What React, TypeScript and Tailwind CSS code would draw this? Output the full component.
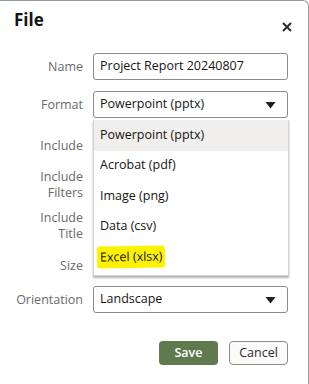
import React from "react";

const font = { fontFamily: '"Open Sans", "Noto Sans", sans-serif' };

const Caret = () => (
  <svg width="11" height="8" viewBox="0 0 11 8" className="shrink-0">
    <path d="M0.5 1 L10.5 1 L5.5 7.5 Z" fill="#1f1f1f" />
  </svg>
);

const Label = ({ children }: { children: React.ReactNode }) => (
  <div className="w-[70px] shrink-0 text-right text-[12.5px] leading-[16px] text-[#6a6a6a]">
    {children}
  </div>
);

const options = ["Powerpoint (pptx)", "Acrobat (pdf)", "Image (png)", "Data (csv)", "Excel (xlsx)"];

export default function App() {
  return (
    <div
      className="relative w-[309px] h-[384px] bg-white border-t border-r border-[#9a9a9a] rounded-tr-[6px] overflow-hidden text-[#161513]"
      style={font}
    >
      {/* header */}
      <div className="flex items-start justify-between pl-[14px] pr-[16px] pt-[7px]">
        <h1 className="text-[17px] font-bold leading-[24px] text-[#161513]">File</h1>
        <svg width="10" height="10" viewBox="0 0 10 10" className="mt-[14px]">
          <path d="M1 1 L9 9 M9 1 L1 9" stroke="#2a2a2a" strokeWidth="2" />
        </svg>
      </div>

      {/* form */}
      <div className="flex flex-col pl-[13px] pr-[20px] mt-[21px]">
        <div className="flex items-center gap-[10px] h-[27px]">
          <Label>Name</Label>
          <div className="flex-1 h-[27px] border border-[#8c8c8c] rounded-[3px] flex items-center px-[6px] text-[12.5px]">
            Project Report 20240807
          </div>
        </div>
        <div className="flex items-center gap-[10px] h-[27px] mt-[11px]">
          <Label>Format</Label>
          <div className="flex-1 h-[27px] border border-[#8c8c8c] rounded-[3px] flex items-center justify-between pl-[6px] pr-[11px] text-[12.5px]">
            <span>Powerpoint (pptx)</span>
            <Caret />
          </div>
        </div>
        <div className="flex items-center gap-[10px] h-[28px] mt-[14px]">
          <Label>Include</Label>
        </div>
        <div className="flex items-center gap-[10px] h-[32px] mt-[9px]">
          <Label>
            Include
            <br />
            Filters
          </Label>
        </div>
        <div className="flex items-center gap-[10px] h-[32px] mt-[9px]">
          <Label>
            Include
            <br />
            Title
          </Label>
        </div>
        <div className="flex items-center gap-[10px] h-[28px] mt-[10px]">
          <Label>Size</Label>
        </div>
        <div className="flex items-center gap-[10px] h-[27px] mt-[6px]">
          <Label>Orientation</Label>
          <div className="flex-1 h-[27px] border border-[#8c8c8c] rounded-[3px] flex items-center justify-between pl-[6px] pr-[11px] text-[12.5px]">
            <span>Landscape</span>
            <Caret />
          </div>
        </div>

        <div className="flex justify-end gap-[11px] mt-[28px]">
          <button className="w-[59px] h-[24px] rounded-[4px] bg-[#5e7a4e] text-white text-[12.5px] font-semibold">
            Save
          </button>
          <button className="w-[59px] h-[24px] rounded-[4px] border border-[#8c8c8c] bg-[#fcfbfa] text-[12.5px] text-[#2a2a2a]">
            Cancel
          </button>
        </div>
      </div>

      {/* open format dropdown */}
      <div className="absolute left-[93px] top-[119px] w-[196px] bg-white border-x border-b border-[#d4d4d4] shadow-[0_2px_2px_rgba(0,0,0,0.3)] pb-[2px]">
        {options.map((o, i) => (
          <div
            key={o}
            className={`h-[30.5px] flex items-center px-[6px] text-[12.5px] ${i === 0 ? "bg-[#f0efed]" : ""}`}
          >
            {i === 4 ? (
              <span className="-ml-[3px] px-[3px] bg-[#fff200] rounded-[3px] leading-[22px] -rotate-[1deg]">{o}</span>
            ) : (
              o
            )}
          </div>
        ))}
      </div>
    </div>
  );
}
